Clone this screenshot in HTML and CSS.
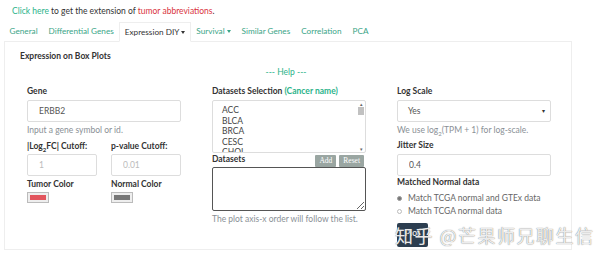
FILE: index.html
```html
<!DOCTYPE html>
<html lang="en">
<head>
    <meta charset="UTF-8">
    <meta name="viewport" content="width=device-width, initial-scale=1.0">
    <title>Expression DIY</title>
    <link rel="stylesheet" href="styles.css">
</head>
<body>
    <p class="notice"><a class="link">Click here</a> to get the extension of <span class="red">tumor abbreviations</span>.</p>

    <!-- Tabs -->
    <ul class="tabs">
        <li><a>General</a></li>
        <li><a>Differential Genes</a></li>
        <li class="active"><a>Expression DIY<span class="caret"></span></a></li>
        <li><a>Survival<span class="caret"></span></a></li>
        <li><a>Similar Genes</a></li>
        <li><a>Correlation</a></li>
        <li><a>PCA</a></li>
    </ul>

    <div class="panel">
        <h3>Expression on Box Plots</h3>
        <div class="help">--- Help ---</div>

        <div class="columns">
            <!-- Column 1 -->
            <div class="col">
                <label>Gene</label>
                <input type="text" class="field" value="ERBB2">
                <p class="hint">Input a gene symbol or id.</p>
                <div class="pair">
                    <div>
                        <label>|Log<sub>2</sub>FC| Cutoff:</label>
                        <input type="text" class="field small" placeholder="1">
                    </div>
                    <div>
                        <label>p-value Cutoff:</label>
                        <input type="text" class="field small" placeholder="0.01">
                    </div>
                    <div>
                        <label>Tumor Color</label>
                        <span class="swatch"><span class="chip tumor"></span></span>
                    </div>
                    <div>
                        <label>Normal Color</label>
                        <span class="swatch"><span class="chip normal"></span></span>
                    </div>
                </div>
            </div>

            <!-- Column 2 -->
            <div class="col">
                <label>Datasets Selection <span class="green">(Cancer name)</span></label>
                <div class="listbox">
                    <ul>
                        <li>ACC</li>
                        <li>BLCA</li>
                        <li>BRCA</li>
                        <li>CESC</li>
                        <li class="cut">CHOL</li>
                    </ul>
                    <div class="scroll"><span class="up">&#9652;</span><span class="thumb"></span><span class="down">&#9662;</span></div>
                </div>
                <div class="datasets-head">
                    <label>Datasets</label>
                    <span class="btns"><button class="mini">Add</button><button class="mini">Reset</button></span>
                </div>
                <textarea class="area"></textarea>
                <p class="hint">The plot axis-x order will follow the list.</p>
            </div>

            <!-- Column 3 -->
            <div class="col">
                <label>Log Scale</label>
                <div class="field select">Yes<span class="arrow">&#9662;</span></div>
                <p class="hint">We use log<sub>2</sub>(TPM + 1) for log-scale.</p>
                <label>Jitter Size</label>
                <input type="text" class="field" value="0.4">
                <label class="matched">Matched Normal data</label>
                <div class="radio"><span class="dot on"></span>Match TCGA normal and GTEx data</div>
                <div class="radio"><span class="dot"></span>Match TCGA normal data</div>
                <div class="plot">Plot</div>
            </div>
        </div>
    </div>

    <div class="watermark">知乎 @芒果师兄聊生信</div>
</body>
</html>
```

FILE: styles.css
```css
body {
    margin: 0;
    font-family: Lato, "Noto Sans", sans-serif;
    font-size: 8.5px;
    color: #333;
    background-color: white;
    position: relative;
    height: 267px;
    overflow: hidden;
}
.notice {
    margin: 0;
    padding: 5px 0 0 12px;
    height: 13px;
    line-height: 12px;
}
.link {
    color: #2bb38a;
}
.red {
    color: #d9343e;
}
.green {
    color: #2bb38a;
}
.tabs {
    list-style: none;
    margin: 4px 0 0 0;
    padding: 0 0 0 4px;
    display: flex;
    height: 19px;
    font-size: 8.2px;
}
.tabs li a {
    display: block;
    padding: 0 5.5px;
    line-height: 19px;
    color: #3aa587;
}
.tabs li.active a {
    color: #333;
    background-color: white;
    border: 1px solid #eee;
    border-bottom-color: white;
    line-height: 18px;
    padding: 0 4.5px;
}
.caret {
    display: inline-block;
    width: 0;
    height: 0;
    margin-left: 2px;
    vertical-align: middle;
    border-top: 3px solid;
    border-left: 2.5px solid transparent;
    border-right: 2.5px solid transparent;
}
.panel {
    margin: 0 28px 0 4px;
    border: 1px solid #eee;
    height: 207px;
    padding: 0;
}
h3 {
    margin: 0;
    padding: 8px 0 0 15px;
    font-size: 8.5px;
    font-weight: bold;
    color: #333;
    line-height: 12px;
}
.help {
    text-align: center;
    color: #2bb38a;
    margin-top: 4px;
    line-height: 12px;
    padding-right: 4px;
}
.columns {
    display: grid;
    grid-template-columns: 154px 154px 154px;
    column-gap: 31px;
    padding-left: 22px;
    margin-top: 8px;
}
label {
    display: block;
    font-weight: bold;
    line-height: 11px;
    margin-bottom: 3px;
}
label sub, .hint sub {
    font-size: 6px;
    line-height: 0;
}
.field {
    display: block;
    box-sizing: border-box;
    width: 154px;
    height: 22px;
    border: 1px solid #ddd;
    border-radius: 2px;
    padding: 0 11px;
    font-family: inherit;
    font-size: 8.5px;
    color: #555;
    margin: 0;
    line-height: 20px;
}
.field::placeholder {
    color: #bbb;
}
.field.small {
    width: 70px;
}
.hint {
    margin: 3px 0 4px 0;
    color: #8a9096;
    line-height: 11px;
    height: 11px;
}
.pair {
    display: grid;
    grid-template-columns: 84px 70px;
}
.pair label {
    margin-bottom: 2px;
    margin-top: 1px;
}
.pair .field {
    margin-bottom: 2px;
}
.swatch {
    display: block;
    box-sizing: border-box;
    width: 22px;
    height: 11px;
    border: 1px solid #bbb;
    background: #eee;
    padding: 2px;
    margin-top: 2px;
}
.chip {
    display: block;
    height: 5px;
}
.tumor {
    background-color: #e2555d;
}
.normal {
    background-color: #777;
}
.listbox {
    box-sizing: border-box;
    width: 154px;
    height: 53px;
    border: 1px solid #ddd;
    border-radius: 2px;
    display: flex;
    overflow: hidden;
}
.listbox ul {
    list-style: none;
    margin: 0;
    padding: 4px 0 0 9px;
    flex: 1;
    color: #444;
}
.listbox li {
    line-height: 10.5px;
}
.listbox li.cut {
    height: 5px;
    overflow: hidden;
}
.scroll {
    width: 8px;
    display: flex;
    flex-direction: column;
    align-items: center;
    font-size: 5px;
    color: #666;
    line-height: 6px;
}
.thumb {
    display: block;
    width: 6px;
    height: 8px;
    background: #c1c1c1;
}
.down {
    margin-top: auto;
}
.datasets-head {
    display: flex;
    justify-content: space-between;
    align-items: flex-end;
    height: 14px;
}
.datasets-head label {
    margin: 0 0 2px 0;
}
.btns {
    display: flex;
    gap: 3px;
    padding-right: 2px;
}
.mini {
    background-color: #9aa6a2;
    color: white;
    border: none;
    padding: 0 4px;
    height: 12px;
    font-family: "Liberation Serif", serif;
    font-size: 7.5px;
    line-height: 12px;
    border-radius: 1px;
}
.area {
    display: block;
    box-sizing: border-box;
    width: 154px;
    height: 44px;
    border: 1px solid #555;
    border-radius: 2px;
    margin: 0;
    resize: vertical;
}
.col .area + .hint {
    margin-top: 3px;
}
.select {
    display: flex;
    justify-content: space-between;
    align-items: center;
    padding: 0 5px 0 10px;
    color: #555;
}
.arrow {
    font-size: 6px;
    color: #333;
}
.matched {
    margin-top: 1px;
    margin-bottom: 4px;
}
.radio {
    display: flex;
    align-items: center;
    color: #666;
    line-height: 13px;
}
.dot {
    display: inline-block;
    box-sizing: border-box;
    width: 5px;
    height: 5px;
    border-radius: 50%;
    border: 1px solid #bbb;
    margin: 0 6px 0 0;
}
.dot.on {
    background-color: #777;
    border-color: #999;
}
.plot {
    margin-top: 5px;
    background-color: #2c3e50;
    color: white;
    border-radius: 2px;
    width: 31px;
    height: 24px;
    line-height: 20px;
    text-align: center;
}
.watermark {
    position: absolute;
    left: 395px;
    top: 224px;
    font-family: "Noto Sans CJK SC", sans-serif;
    font-size: 18px;
    line-height: 22px;
    color: rgba(255, 255, 255, 0.9);
    letter-spacing: 1.5px;
    white-space: nowrap;
    text-shadow: 0 0 1px #555;
}
```
